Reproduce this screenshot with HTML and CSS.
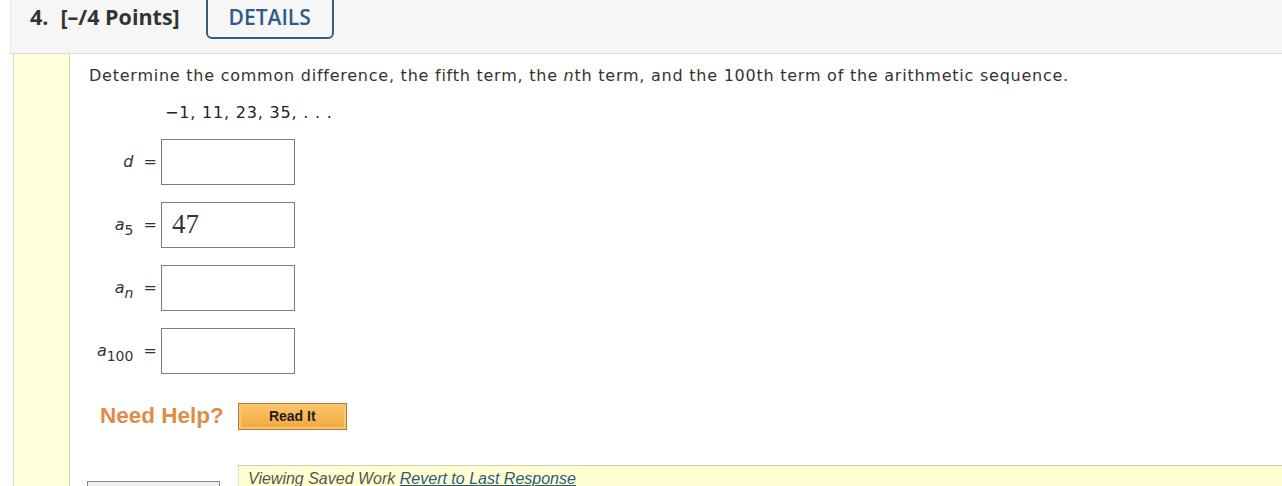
FILE: index.html
```html
<!DOCTYPE html>
<html>
<head>
<meta charset="utf-8">
<link rel="stylesheet" href="styles.css">
</head>
<body>
<div class="question">
  <div class="header">
    <div class="title"><span class="num">4.</span><span class="pts">[–/4 Points]</span></div>
    <div class="details">DETAILS</div>
  </div>
  <div class="main">
    <div class="strip"></div>
    <div class="content">
      <p class="prompt">Determine the common difference, the fifth term, the <i>n</i>th term, and the 100th term of the arithmetic sequence.</p>
      <p class="seq">−1, 11, 23, 35, . . .</p>
      <div class="answers">
        <div class="lbl"><i>d</i>&nbsp; =</div>
        <div class="box"></div>
        <div class="lbl"><i>a</i><sub>5</sub>&nbsp; =</div>
        <div class="box"><span class="val">47</span></div>
        <div class="lbl"><i>a</i><sub><i>n</i></sub>&nbsp; =</div>
        <div class="box"></div>
        <div class="lbl"><i>a</i><sub>100</sub>&nbsp; =</div>
        <div class="box"></div>
      </div>
      <div class="help">
        <span class="need">Need Help?</span>
        <span class="readit">Read It</span>
      </div>
      <div class="bottom">
        <div class="greybox"></div>
        <div class="saved">Viewing Saved Work <a href="#">Revert to Last Response</a></div>
      </div>
    </div>
  </div>
</div>
</body>
</html>
```
FILE: styles.css
```css
html, body { margin: 0; padding: 0; background: #fff; overflow: hidden; }
body { width: 1282px; height: 486px; }
.question { margin-left: 10px; }
.header {
  height: 53px;
  background: #f6f6f6;
  border-bottom: 1px solid #dcdcdc;
  border-left: 1px solid #e6e6e6;
  display: flex;
  align-items: flex-start;
  box-sizing: content-box;
}
.title {
  font-family: "Open Sans", sans-serif;
  font-weight: 700;
  font-size: 21.5px;
  color: #333;
  padding-left: 19px;
  margin-top: 2px;
  line-height: 30px;
}
.title .num { margin-right: 12px; }
.details {
  margin-left: 26px;
  margin-top: -2px;
  width: 128px;
  height: 41px;
  border: 2px solid #2f5d88;
  border-radius: 0 0 6px 6px;
  font-family: "Open Sans", sans-serif;
  font-weight: 600;
  font-size: 21px;
  color: #2e5b88;
  display: flex;
  align-items: center;
  justify-content: center;
  padding-bottom: 3px;
  line-height: 28px;
  box-sizing: border-box;
}
.main { display: flex; }
.strip {
  margin-left: 3px;
  width: 55px;
  height: 440px;
  background: #ffffdc;
  border-left: 1px solid #d8d8c4;
  border-right: 1px solid #d4d4b8;
}
.content {
  padding-left: 19px;
  flex: 1;
  font-family: "DejaVu Sans", Verdana, sans-serif;
  font-size: 16px;
  color: #333;
}
.prompt { margin: 12px 0 0; line-height: 20px; letter-spacing: 0.76px; }
.seq { margin: 17px 0 0 76px; line-height: 20px; color: #222; letter-spacing: 0.8px; }
.answers {
  margin-top: 16px;
  display: grid;
  grid-template-columns: 68px 134px;
  column-gap: 4px;
  row-gap: 17px;
  align-items: center;
}
.lbl { text-align: right; line-height: 20px; color: #333; }
.lbl sub { font-size: 14px; vertical-align: -5px; line-height: 0; }
.box {
  height: 44px;
  border: 1px solid #7c7c7c;
  background: #fff;
  display: flex;
  align-items: center;
}
.val {
  font-family: "Liberation Serif", "DejaVu Serif", serif;
  font-size: 27px;
  color: #333;
  margin-left: 10px;
  margin-top: -2px;
}
.help {
  margin-top: 28px;
  display: flex;
  align-items: center;
  margin-left: 11px;
  height: 28px;
}
.need {
  font-family: "Liberation Sans", Arial, sans-serif;
  font-weight: 700;
  font-size: 22.5px;
  color: #e08c45;
}
.readit {
  margin-left: 14px;
  width: 107px;
  height: 25px;
  border: 1px solid #c0782e;
  background: linear-gradient(#fbc56a, #f2a840);
  box-shadow: inset 0 0 0 2px #f7c57a;
  display: flex;
  align-items: center;
  justify-content: center;
  font-family: "Liberation Sans", Arial, sans-serif;
  font-weight: 700;
  font-size: 14px;
  color: #1e1e1e;
}
.bottom {
  margin-top: 35px;
  display: flex;
  align-items: flex-start;
}
.greybox {
  margin-left: -2px;
  margin-top: 16px;
  width: 131px;
  height: 20px;
  border: 1px solid #8a8a8a;
  background: #efefef;
}
.saved {
  margin-left: 18px;
  flex: 1;
  height: 30px;
  border-top: 1px solid #c8c8b0;
  border-left: 1px solid #e4e4c8;
  background: #ffffd2;
  font-family: "Liberation Sans", Arial, sans-serif;
  font-style: italic;
  font-size: 16px;
  color: #555;
  padding-left: 9px;
  padding-top: 4px;
  line-height: 18px;
}
.saved a { color: #2c5a7c; text-decoration: underline; }
```
